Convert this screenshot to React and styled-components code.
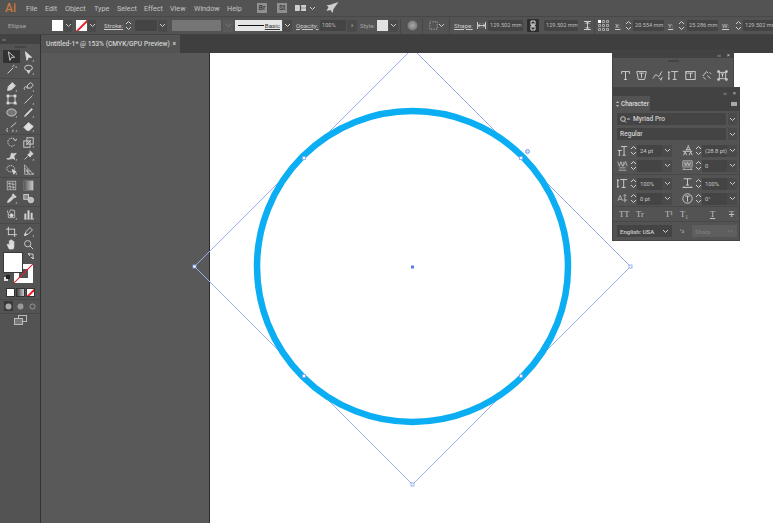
import styled, { createGlobalStyle } from "styled-components"

const GlobalStyle = createGlobalStyle`
    html, body {
        margin: 0;
        padding: 0;
        height: 100%;
        overflow: hidden;
        background: #535353;
        font-family: Roboto, "Liberation Sans", sans-serif;
    }
    #root {
        height: 100%;
    }
`

const Window = styled.div`
    width: 773px;
    height: 523px;
    display: flex;
    flex-direction: column;
    overflow: hidden;
    color: #d0d0d0;
`

const MenuBar = styled.div`
    height: 16px;
    display: flex;
    align-items: center;
    background: #535353;
    flex: none;
`

const Logo = styled.span`
    width: 26px;
    padding-left: 5px;
    box-sizing: border-box;
    color: #c4793f;
    font: 500 12px Roboto, sans-serif;
`

const MenuItem = styled.span`
    flex: none;
    width: ${(p) => p.$w}px;
    font-size: 7.2px;
    color: #c4c4c4;
`

const BridgeButton = styled.span`
    width: 10px;
    height: 10px;
    margin-left: ${(p) => p.$left}px;
    background: #8f8f8f;
    color: #3c3c3c;
    font-size: 6.5px;
    font-weight: 700;
    display: flex;
    align-items: center;
    justify-content: center;
`

const ControlBar = styled.div`
    height: 17px;
    flex: none;
    display: flex;
    align-items: center;
    background: #535353;
    border-top: 1px solid #484848;
    border-bottom: 1px solid #434343;
    white-space: nowrap;

    & > * {
        flex: none;
    }
`

const Spaced = styled.span`
    display: flex;
    align-items: center;
    flex: none;
    margin-left: ${(p) => p.$left || 0}px;
`

const Label = styled.span`
    font-size: 6.2px;
    color: ${(p) => p.$dim ? "#a8a8a8" : "#cbcbcb"};
    width: ${(p) => p.$w}px;
    margin-left: ${(p) => p.$left || 0}px;
    text-decoration: ${(p) => p.$under ? "underline" : "none"};
`

const Swatch = styled.span`
    position: relative;
    overflow: hidden;
    width: 11px;
    height: 11px;
    margin-left: ${(p) => p.$left || 0}px;
    background: ${(p) => p.$color || "#fff"};
`

const RedSlash = styled.span`
    position: absolute;
    left: -3px;
    top: 5px;
    width: 18px;
    height: 1.5px;
    background: #e8242a;
    transform: rotate(-45deg);
`

const DropBox = styled.span`
    flex: none;
    width: ${(p) => p.$w || 9}px;
    height: 12px;
    margin-left: ${(p) => p.$left || 0}px;
    display: flex;
    align-items: center;
    justify-content: center;
    background: ${(p) => p.$off ? "#5a5a5a" : "#4a4a4a"};
    border-radius: 1px;
    font-size: 7px;
`

const InputBox = styled.span`
    width: ${(p) => p.$w}px;
    height: 11px;
    margin-left: ${(p) => p.$left || 0}px;
    padding-left: 2px;
    box-sizing: border-box;
    background: ${(p) => p.$bg || "#444"};
    color: #bdbdbd;
    font-size: 5.6px;
    line-height: 11px;
    border-radius: 1px;
`

const StrokeProfile = styled.span`
    width: 47px;
    height: 11px;
    margin-left: 2px;
    background: #e6e6e6;
    display: flex;
    align-items: center;
    gap: 1px;
    padding: 0 2px 0 3px;
    box-sizing: border-box;
    color: #333;
    font-size: 6.2px;
    text-decoration: underline;
`

const ProfileLine = styled.span`
    flex: 1;
    height: 1px;
    background: #111;
`

const Divider = styled.span`
    width: 1px;
    height: 16px;
    margin-left: ${(p) => p.$left || 0}px;
    background: #474747;
`

const LinkButton = styled.span`
    width: 12px;
    height: 13px;
    margin-left: 4px;
    background: #2e2e2e;
    border-radius: 1px;
    display: flex;
    align-items: center;
    justify-content: center;
`

const Body = styled.div`
    flex: 1;
    display: flex;
    min-height: 0;
`

const ToolsPanel = styled.aside`
    width: 40px;
    flex: none;
    background: #535353;
    border-right: 1px solid #333;
    display: flex;
    flex-direction: column;
`

const PanelCap = styled.div`
    height: 9px;
    background: #424242;
    color: #bbb;
    font-size: 6px;
    line-height: 8px;
    padding-left: 2px;
`

const Grip = styled.div`
    width: 11px;
    height: 2px;
    margin: 2px auto 1px;
    background: #444;
`

const HiddenDefs = styled.svg`
    position: absolute;
`

const ToolGroup = styled.div`
    display: grid;
    grid-template-columns: 17px 17px;
    grid-auto-rows: 13.3px;
    padding: 1px 2px 1px 3px;
    border-bottom: ${(p) => p.$last ? "none" : "1px solid #484848"};
`

const ToolCell = styled.span`
    display: flex;
    align-items: center;
    justify-content: center;
    background: ${(p) => p.$active ? "#333" : "transparent"};
`

const ColorBlock = styled.div`
    position: relative;
    height: 33px;
    margin: 1px 0 0 4px;
`

const FillSquare = styled.span`
    position: absolute;
    left: 0;
    top: 0;
    width: 18px;
    height: 19px;
    background: #fff;
    box-shadow: 0 0 0 1px #3a3a3a;
    z-index: 1;
`

const StrokeSquare = styled.span`
    position: absolute;
    left: 10px;
    top: 11px;
    width: 19px;
    height: 19px;
    background: #fff;
    overflow: hidden;
`

const StrokeHole = styled.span`
    position: absolute;
    left: 5px;
    top: 5px;
    width: 9px;
    height: 9px;
    background: #535353;
`

const StrokeSlash = styled.span`
    position: absolute;
    left: -4px;
    top: 9px;
    width: 27px;
    height: 1.2px;
    background: #ee1c25;
    transform: rotate(-45deg);
`

const SwapArrow = styled.svg`
    position: absolute;
    left: 23px;
    top: 0;
`

const DefaultMini = styled.svg`
    position: absolute;
    left: 0;
    top: 22px;
`

const ModeRow = styled.div`
    display: flex;
    gap: 3px;
    justify-content: center;
    align-items: center;
    height: 10px;
    padding-bottom: 2px;
    border-bottom: 1px solid #484848;
    margin-top: 1px;
`

const ModeSwatch = styled.span`
    position: relative;
    overflow: hidden;
    width: 7px;
    height: 7px;
    background: ${(p) => p.$fill};
    box-shadow: 0 0 0 1px #333;
`

const NoneSlash = styled.span`
    position: absolute;
    left: -2px;
    top: 3px;
    width: 12px;
    height: 1.5px;
    background: #ee1c25;
    transform: rotate(-45deg);
`

const DrawMode = styled.span`
    width: 9px;
    height: 10px;
    display: flex;
    align-items: center;
    justify-content: center;
    background: ${(p) => p.$active ? "#3a3a3a" : "transparent"};
`

const ScreenRow = styled.div`
    display: flex;
    justify-content: center;
    padding-top: 1px;
`

const Main = styled.main`
    flex: 1;
    min-width: 0;
    display: flex;
    flex-direction: column;
`

const TabBar = styled.div`
    height: 18px;
    flex: none;
    background: #3f3f3f;
    display: flex;
`

const Tab = styled.div`
    width: 139px;
    display: flex;
    align-items: center;
    justify-content: space-between;
    padding: 0 4px 0 5px;
    box-sizing: border-box;
    background: #535353;
    font-size: 6.7px;
    font-weight: 500;
    color: #d0d0d0;
    white-space: nowrap;
`

const Workspace = styled.div`
    position: relative;
    flex: 1;
    display: flex;
    min-height: 0;
`

const Pasteboard = styled.div`
    width: 168px;
    flex: none;
    background: #595959;
    border-right: 1px solid #2b2b2b;
`

const Artboard = styled.div`
    flex: 1;
    background: #fff;
`

const Selection = styled.svg`
    position: absolute;
    left: 0;
    top: 0;
    pointer-events: none;
`

const FloatingPanel = styled.section`
    position: absolute;
    left: ${(p) => p.$left}px;
    top: ${(p) => p.$top}px;
    width: ${(p) => p.$w}px;
    background: #535353;
    box-shadow: 0 0 0 1px #444;
`

const PanelHeader = styled.div`
    height: ${(p) => p.$h}px;
    background: #424242;
    display: flex;
    justify-content: flex-end;
    align-items: center;
    gap: 6px;
    padding-right: 3px;
    color: #c5c5c5;
    font-size: 6px;
`

const GlyphRow = styled.div`
    display: flex;
    justify-content: space-between;
    padding: 0 5px 0 7px;
    height: 25px;
    align-items: center;
`

const TabRow = styled.div`
    height: 15px;
    background: #424242;
    display: flex;
    justify-content: space-between;
    align-items: center;
    padding-right: 2px;
`

const PanelTab = styled.div`
    width: 37px;
    height: 15px;
    display: flex;
    align-items: center;
    gap: 2px;
    padding-left: 3px;
    box-sizing: border-box;
    background: #535353;
    font-size: 6.4px;
    font-weight: 500;
    color: #dcdcdc;
`

const PanelMenu = styled.span`
    width: 6px;
    height: 4px;
    background: #aaa;
`

const FontRow = styled.div`
    display: flex;
    align-items: center;
    gap: 2px;
    padding: ${(p) => p.$top}px 3px 0 4px;
`

const FontInput = styled.div`
    width: 109px;
    height: 12px;
    flex: none;
    background: #444;
    display: flex;
    align-items: center;
    gap: 3px;
    padding-left: 3px;
    box-sizing: border-box;
    font-size: 6.6px;
    font-weight: 500;
    color: #cfcfcf;
`

const FieldGrid = styled.div`
    display: grid;
    grid-template-columns: 65px 61px;
    padding: ${(p) => p.$top}px 0 ${(p) => p.$bottom}px 0;
    border-bottom: ${(p) => p.$line ? "1px solid #484848" : "none"};
    grid-auto-rows: 15px;
    align-items: center;
`

const Field = styled.div`
    display: flex;
    align-items: center;
    height: 12px;
`

const FieldIcon = styled.span`
    width: 16px;
    flex: none;
    display: flex;
    justify-content: center;
    padding-left: 2px;
    box-sizing: border-box;
`

const FieldSpin = styled.span`
    width: 8px;
    flex: none;
    display: flex;
    justify-content: center;
`

const FieldValue = styled.span`
    flex: none;
    width: 25px;
    height: 12px;
    padding-left: 3px;
    box-sizing: border-box;
    background: #444;
    font-size: 5.8px;
    line-height: 12px;
    color: #c8c8c8;
    white-space: nowrap;
`

const StyleRow = styled.div`
    display: flex;
    align-items: center;
    height: 14px;
    padding-left: 6px;
    border-top: 1px solid #484848;
    border-bottom: 1px solid #484848;
`

const StyleGlyph = styled.span`
    flex: none;
    width: ${(p) => p.$w}px;
    font: 400 8.5px "Liberation Serif", serif;
    color: #c2c2c2;
    text-decoration: ${(p) => p.$line || "none"};
`

const LangRow = styled.div`
    display: flex;
    align-items: center;
    padding: 3px 3px 3px 4px;
    gap: 4px;
`

const LangBox = styled.span`
    flex: none;
    width: ${(p) => p.$w}px;
    height: 12px;
    display: flex;
    align-items: center;
    justify-content: space-between;
    padding: 0 3px;
    box-sizing: border-box;
    background: ${(p) => p.$off ? "#5e5e5e" : "#444"};
    color: ${(p) => p.$off ? "#7c7c7c" : "#d0d0d0"};
    font-size: 6px;
    font-weight: 500;
`

const LangGlyph = styled.span`
    flex: none;
    width: 12px;
    text-align: center;
    font: 400 6px "Liberation Serif", serif;
    color: #bbb;
`

const Chevron = ({ color = "#cfcfcf" }) => (
    <svg width="7" height="5" viewBox="0 0 7 5">
        <path d="M1 1l2.500 2.500L6 1" fill="none" stroke={color} strokeWidth="1" />
    </svg>
)

const Spinner = () => (
    <svg width="7" height="11" viewBox="0 0 7 11">
        <path d="M1 4l2.500-2.500L6 4M1 7l2.500 2.500L6 7" fill="none" stroke="#cfcfcf" strokeWidth="1" />
    </svg>
)

const Ico = ({ s = 11, children }) => (
    <svg width={s} height={s} viewBox="0 0 14 14" fill="none" stroke="#cfcfcf" strokeWidth="1.2">
        {children}
    </svg>
)

const Corner = () => <path d="M12.500 13h1v-1z" fill="#ddd" stroke="#ddd" strokeWidth=".6" />

const toolGroups = [
    [
        [<path d="M3 1l8 7H7l-2 4z" />, <><path d="M3 1l8 7H7l-2 4z" fill="#e0e0e0" /><Corner /></>],
        [<><path d="M2 12l7-7" /><path d="M10 1v2M12 4h2M8 3l1 1" /></>, <><ellipse cx="7" cy="5" rx="5" ry="3.500" /><path d="M5 8l2 4 2-3" fill="#ddd" /><Corner /></>],
    ],
    [
        [<><path d="M2 12l1-5 5-5 4 4-5 5z" fill="#d4d4d4" /><Corner /></>, <><path d="M2 11c-2-4 3-5 4-2M5 9l1-4 4-3 3 3-3 4z" /><Corner /></>],
        [<><rect x="2.500" y="2.500" width="9" height="9" /><path d="M1 1h3v3H1zM10 1h3v3h-3zM1 10h3v3H1zM10 10h3v3h-3z" fill="#ddd" strokeWidth=".4" /><Corner /></>, <><path d="M2 12L12 2" /><Corner /></>],
        [<><ellipse cx="7" cy="7" rx="6" ry="4.500" fill="#777" /><Corner /></>, <><path d="M2 12l2-1 8-8-1-1-8 8z" fill="#d4d4d4" /><Corner /></>],
        [<><path d="M2 9a4 4 0 1 0 7 2M6 8l7-6" /><Corner /></>, <><path d="M1 8l6-6 6 5-5 5H5z" fill="#e0e0e0" /><Corner /></>],
    ],
    [
        [<><path d="M11 10a5 5 0 1 1 1-5" strokeDasharray="2 1" /><path d="M9 1l3 4 2-3" /></>, <><rect x="1" y="5" width="8" height="8" /><rect x="5" y="1" width="8" height="8" /><path d="M4 10l6-6" /><Corner /></>],
        [<><path d="M1 11c3 1 4-1 5-3l1-4 3 1 3-1-3 4 1 4c-3-3-6 1-10-1z" fill="#d4d4d4" /><Corner /></>, <><path d="M9 1l4 4-2 1-2 3-3-3 3-2zM6 8l-4 4" fill="#d4d4d4" /><Corner /></>],
        [<><ellipse cx="6" cy="6" rx="5" ry="4" strokeDasharray="2 1" /><path d="M8 7l5 3-2 1-1 2z" fill="#ddd" /><Corner /></>, <><path d="M2 1v12h11zM2 5l7 8M6 6v7M2 9h8" strokeWidth=".9" /><Corner /></>],
    ],
    [
        [<><rect x="1.500" y="1.500" width="11" height="11" strokeWidth=".8" /><path d="M2 5c3-2 7 2 10 0M2 9c3-2 7 2 10 0M5 2c-2 3 2 7 0 10M9 2c-2 3 2 7 0 10" strokeWidth=".9" /></>, <rect x="1" y="1" width="12" height="12" fill="url(#toolGrad)" stroke="#888" strokeWidth=".6" />],
        [<><path d="M2 12l1-3 5-5 2 2-5 5zM8 3l1-2 4 4-2 1z" fill="#d4d4d4" /><Corner /></>, <><rect x="1" y="2" width="6" height="6" fill="#888" /><circle cx="10" cy="9" r="3.500" fill="#bbb" /></>],
    ],
    [
        [<><path d="M2 2v3M2 7h1M6 1l5 1v9H3V6z" strokeWidth="1" /><circle cx="7" cy="8" r="2" fill="#ddd" /><Corner /></>, <><path d="M2 13V6h2v7zM6 13V2h2v11zM10 13V5h2v8zM1 13h12" fill="#d4d4d4" strokeWidth=".5" /><Corner /></>],
    ],
    [
        [<><rect x="3" y="4" width="8" height="7" /><path d="M3 1v3M0 4h3M11 11v3M11 11h3" /></>, <><path d="M2 12l2-5 5-5 3 3-5 5z" /><path d="M2 12l3-1-2-2z" fill="#ddd" /><Corner /></>],
        [<path d="M4 13L1 7l2-1 1 2V2h1.600v5V1h1.600v6V1.600h1.600V7V3h1.600v7l-1 3z" fill="#e0e0e0" strokeWidth=".3" />, <><circle cx="6" cy="6" r="4" /><path d="M9 9l4 4" /></>],
    ],
]

const typeGlyphs = [
    <path d="M2 5V2h10v3M7 2v10M5 12h4" />,
    <><path d="M1 2h12l-2 10H3z" /><path d="M4 4h6M7 4v6" /></>,
    <path d="M1 11c2-1 2-5 4-5s2 3 4 2 1-5 4-6M9 10l3 3M13 9l-2 4" />,
    <path d="M1 2v10M0 4l1-2 1 2M0 10l1 2 1-2M4 2h9M8.500 2v10M6 12h5" />,
    <><rect x="1" y="2" width="12" height="10" /><path d="M4 4h6M7 4v6M1 2l2 3" /></>,
    <path d="M2 8l5-6 2 2M3 9l3 3M8 7l4 4M11 3l2 2" />,
    <><path d="M3 3h8v8H3zM5 5h4M7 5v4" /><path d="M1 1h2v2H1zM11 1h2v2h-2zM1 11h2v2H1zM11 11h2v2h-2z" fill="#ccc" /></>,
]

const fieldIcons = {
    size: <path d="M5 2h8M9 2v11M7 13h4M1 7h5M3 7v6M2 13h2" />,
    lead: <path d="M7 1h2M5 7l3-5 3 5M6 6h4M1 8h12M2 13l2-4 2 4M9 13l2-4 2 4" />,
    kern: <path d="M1 2l2 6 2-6M5 2l2 6 2-6M8 8l3-6 2 6M3 10h8M2 13h10" strokeWidth=".9" />,
    track: <><rect x="1" y="1" width="12" height="8" fill="#777" strokeWidth=".6" /><path d="M3 3l2 4 2-4 2 4 2-4M1 12h12M1 12l2-1M13 12l-2-1" strokeWidth=".9" /></>,
    vscale: <path d="M1 2v10M0 4l1-2 1 2M0 10l1 2 1-2M4 2h9M8.500 2v10M6 12h5" />,
    hscale: <path d="M2 1h10M7 1v8M5 9h4M1 12h12M1 12l2-1M13 12l-2-1" />,
    base: <path d="M1 10l3-7 3 7M2 8h4M10 2v10M8 4l2-2 2 2M8 9h5" strokeWidth=".9" />,
    rot: <><circle cx="7" cy="7" r="6" /><path d="M4 4h6M7 4v7" /></>,
}

const CharField = ({ icon, value }) => (
    <Field>
        <FieldIcon><Ico>{fieldIcons[icon]}</Ico></FieldIcon>
        <FieldSpin><Spinner /></FieldSpin>
        <FieldValue>{value}</FieldValue>
        <DropBox $w={10}><Chevron /></DropBox>
    </Field>
)

const anchors = [[304, 158], [521, 158], [304, 376], [521, 376], [194.5, 266.5], [630.5, 266.5], [412.5, 484.5]]

const menus = [["File", 19], ["Edit", 20], ["Object", 29], ["Type", 23], ["Select", 27], ["Effect", 26], ["View", 24], ["Window", 33], ["Help", 14]]

export default function App() {
    return (
        <>
            <GlobalStyle />
            <Window>
                <MenuBar>
                    <Logo>Ai</Logo>
                    {menus.map(([name, w]) => <MenuItem key={name} $w={w}>{name}</MenuItem>)}
                    <BridgeButton $left={16}>Br</BridgeButton>
                    <BridgeButton $left={10}>St</BridgeButton>
                    <Spaced $left={8}>
                        <svg width="11" height="8" viewBox="0 0 16 9">
                            <path d="M0 0h7v9H0zM9 0h7v4H9zM9 5h7v4H9z" fill="#d0d0d0" />
                        </svg>
                    </Spaced>
                    <Spaced $left={3}><Chevron /></Spaced>
                    <Spaced $left={9}>
                        <svg width="14" height="12" viewBox="0 0 13 12">
                            <path d="M13 0L4 3 1 3l2 2-2 4 4-1 2 3 1-4z" fill="#cfcfcf" />
                        </svg>
                    </Spaced>
                </MenuBar>

                <ControlBar>
                    <Label $dim $w={26} $left={8}>Ellipse</Label>
                    <Swatch $left={18} />
                    <DropBox $left={1} $w={8}><Chevron /></DropBox>
                    <Swatch $left={4}><RedSlash /></Swatch>
                    <DropBox $left={1} $w={8}><Chevron /></DropBox>
                    <Label $under $w={21} $left={8}>Stroke:</Label>
                    <Spinner />
                    <InputBox $w={22} $left={3} />
                    <DropBox $left={1}><Chevron /></DropBox>
                    <InputBox $w={49} $left={5} $bg="#757575" />
                    <DropBox $w={10} $left={2} $off><Chevron color="#777" /></DropBox>
                    <StrokeProfile><ProfileLine />Basic</StrokeProfile>
                    <DropBox $left={1}><Chevron /></DropBox>
                    <Label $under $w={22} $left={4}>Opacity:</Label>
                    <InputBox $w={26} $left={2}>100%</InputBox>
                    <DropBox $w={10} $left={1}>›</DropBox>
                    <Label $dim $w={15} $left={3}>Style:</Label>
                    <Swatch $left={2} $color="#e2e2e2" />
                    <DropBox $left={1}><Chevron /></DropBox>
                    <Divider $left={2} />
                    <Spaced $left={6}>
                        <svg width="11" height="11" viewBox="0 0 11 11">
                            <defs>
                                <radialGradient id="globeFill"><stop offset="0" stopColor="#aaa" /><stop offset="1" stopColor="#777" /></radialGradient>
                            </defs>
                            <circle cx="5.500" cy="5.500" r="5" fill="url(#globeFill)" />
                        </svg>
                    </Spaced>
                    <Divider $left={4} />
                    <Spaced $left={6}>
                        <svg width="9" height="9" viewBox="0 0 11 11">
                            <rect x="1" y="1" width="9" height="9" fill="none" stroke="#bbb" strokeDasharray="1.500 1.500" />
                        </svg>
                    </Spaced>
                    <Chevron />
                    <Divider $left={4} />
                    <Label $under $w={23} $left={4}>Shape:</Label>
                    <svg width="9" height="7" viewBox="0 0 9 7">
                        <path d="M.5 0v7M8.500 0v7M1 3.500h7M1 3.500l2-2M1 3.500l2 2M8 3.500l-2-2M8 3.500l-2 2" fill="none" stroke="#ccc" />
                    </svg>
                    <InputBox $w={35} $left={2}>129.502 mm</InputBox>
                    <LinkButton>
                        <svg width="6" height="11" viewBox="0 0 6 11"><path d="M1 1h4v4H1zM1 6h4v4H1zM3 3v5" fill="none" stroke="#ddd" /></svg>
                    </LinkButton>
                    <InputBox $w={34} $left={5}>129.502 mm</InputBox>
                    <Spaced $left={6}>
                        <svg width="7" height="9" viewBox="0 0 7 9">
                            <path d="M0 .5h7M0 8.500h7M3.500 1v7M3.500 1l-2 2M3.500 1l2 2M3.500 8l-2-2M3.500 8l2-2" fill="none" stroke="#ccc" />
                        </svg>
                    </Spaced>
                    <Divider $left={3} />
                    <Spaced $left={3}>
                        <svg width="11" height="11" viewBox="0 0 11 11">
                            <path d="M0 0h3v3H0z" fill="#fff" />
                            <path d="M4.500.5h2v2h-2zM8.500.5h2v2h-2zM.5 4.500h2v2h-2zM4.500 4.500h2v2h-2zM8.500 4.500h2v2h-2zM.5 8.500h2v2h-2zM4.500 8.500h2v2h-2zM8.500 8.500h2v2h-2z" fill="none" stroke="#bbb" strokeWidth=".8" />
                        </svg>
                    </Spaced>
                    <Label $under $w={6} $left={6}>X:</Label>
                    <Spaced $left={4}><Spinner /></Spaced>
                    <InputBox $w={31} $left={1}>20.554 mm</InputBox>
                    <Label $under $w={6} $left={4}>Y:</Label>
                    <Spaced $left={4}><Spinner /></Spaced>
                    <InputBox $w={31} $left={2}>25.286 mm</InputBox>
                    <Label $under $w={8} $left={4}>W:</Label>
                    <Spaced $left={5}><Spinner /></Spaced>
                    <InputBox $w={30} $left={1}>129.502 mm</InputBox>
                </ControlBar>

                <Body>
                    <ToolsPanel>
                        <PanelCap>‹‹</PanelCap>
                        <Grip />
                        <HiddenDefs width="0" height="0">
                            <defs>
                                <linearGradient id="toolGrad"><stop offset="0" stopColor="#555" /><stop offset="1" stopColor="#ccc" /></linearGradient>
                            </defs>
                        </HiddenDefs>
                        {toolGroups.map((group, g) => (
                            <ToolGroup key={g} $last={g === toolGroups.length - 1}>
                                {group.map((row, r) => row.map((icon, c) => (
                                    <ToolCell key={`${r}-${c}`} $active={g === 0 && r === 0 && c === 0}>
                                        <Ico>{icon}</Ico>
                                    </ToolCell>
                                )))}
                            </ToolGroup>
                        ))}
                        <ColorBlock>
                            <FillSquare />
                            <StrokeSquare><StrokeHole /><StrokeSlash /></StrokeSquare>
                            <SwapArrow width="7" height="7" viewBox="0 0 7 7">
                                <path d="M1 1h5v5M1 1l2-1M1 1l2 2M6 6l-2-2M6 6l1-2" fill="none" stroke="#ccc" />
                            </SwapArrow>
                            <DefaultMini width="6" height="7" viewBox="0 0 6 7">
                                <path d="M0 2h4v4H0z" fill="#ddd" /><path d="M2 0h4v4H2z" fill="#222" />
                            </DefaultMini>
                        </ColorBlock>
                        <ModeRow>
                            <ModeSwatch $fill="#fff" />
                            <ModeSwatch $fill="linear-gradient(90deg,#444,#ccc)" />
                            <ModeSwatch $fill="#fff"><NoneSlash /></ModeSwatch>
                        </ModeRow>
                        <ModeRow>
                            <DrawMode $active><svg width="7" height="7"><circle cx="3.500" cy="3.500" r="3" fill="#aaa" /></svg></DrawMode>
                            <DrawMode><svg width="7" height="7"><circle cx="3.500" cy="3.500" r="3" fill="#999" /></svg></DrawMode>
                            <DrawMode><svg width="7" height="7"><circle cx="3.500" cy="3.500" r="2.500" fill="none" stroke="#999" /></svg></DrawMode>
                        </ModeRow>
                        <ScreenRow>
                            <svg width="13" height="10" viewBox="0 0 13 10">
                                <rect x="4.500" y=".5" width="8" height="6" fill="#535353" stroke="#bbb" />
                                <rect x=".5" y="3.500" width="8" height="6" fill="#777" stroke="#bbb" />
                            </svg>
                        </ScreenRow>
                    </ToolsPanel>

                    <Main>
                        <TabBar>
                            <Tab>
                                Untitled-1* @ 153% (CMYK/GPU Preview)
                                <span>×</span>
                            </Tab>
                        </TabBar>
                        <Workspace>
                            <Pasteboard />
                            <Artboard />
                            <Selection width="732" height="470" viewBox="41 53 732 470">
                                <path d="M412.500 48.500L630.500 266.500 412.500 484.500 194.500 266.500Z" fill="none" stroke="#98aef0" strokeWidth="1" />
                                <circle cx="412.500" cy="266.500" r="155.500" fill="none" stroke="#0baef2" strokeWidth="6.500" />
                                {anchors.map(([x, y]) => (
                                    <rect key={x + "-" + y} x={x - 1.5} y={y - 1.5} width="3" height="3" fill="#fff" stroke="#86a0ea" strokeWidth=".8" />
                                ))}
                                <rect x="411" y="265.500" width="3" height="3" fill="#4f7ee8" />
                                <circle cx="527.500" cy="151.500" r="2" fill="#cfdcfb" stroke="#6f8fe6" strokeWidth=".8" />
                            </Selection>

                            <FloatingPanel $left={572} $top={-2} $w={120}>
                                <PanelHeader $h={7}><span>‹‹</span><span>×</span></PanelHeader>
                                <Grip />
                                <GlyphRow>
                                    {typeGlyphs.map((glyph, i) => (
                                        <Ico key={i}>{glyph}</Ico>
                                    ))}
                                </GlyphRow>
                            </FloatingPanel>

                            <FloatingPanel $left={572} $top={35} $w={126}>
                                <PanelHeader $h={8}><span>‹‹</span><span>×</span></PanelHeader>
                                <TabRow>
                                    <PanelTab>
                                        <svg width="3" height="6" viewBox="0 0 3 6"><path d="M1.500 0L3 2H0zM1.500 6L0 4h3z" fill="#bbb" /></svg>
                                        Character
                                    </PanelTab>
                                    <PanelMenu />
                                </TabRow>
                                <FontRow $top={2}>
                                    <FontInput>
                                        <svg width="10" height="7" viewBox="0 0 10 7"><circle cx="3" cy="3" r="2.300" fill="none" stroke="#ccc" /><path d="M4.500 5l1.500 1.500M7 3h3" stroke="#ccc" /></svg>
                                        Myriad Pro
                                    </FontInput>
                                    <DropBox $w={9}><Chevron /></DropBox>
                                </FontRow>
                                <FontRow $top={3}>
                                    <FontInput>Regular</FontInput>
                                    <DropBox $w={9}><Chevron /></DropBox>
                                </FontRow>
                                <FieldGrid $top={3} $bottom={1} $line>
                                    <CharField icon="size" value="24 pt" />
                                    <CharField icon="lead" value="(28.8 pt)" />
                                    <CharField icon="kern" value="" />
                                    <CharField icon="track" value="0" />
                                </FieldGrid>
                                <FieldGrid $top={1} $bottom={0}>
                                    <CharField icon="vscale" value="100%" />
                                    <CharField icon="hscale" value="100%" />
                                    <CharField icon="base" value="0 pt" />
                                    <CharField icon="rot" value="0°" />
                                </FieldGrid>
                                <StyleRow>
                                    <StyleGlyph $w={17}>TT</StyleGlyph>
                                    <StyleGlyph $w={29}>Tr</StyleGlyph>
                                    <StyleGlyph $w={15}>T¹</StyleGlyph>
                                    <StyleGlyph $w={30}>T₁</StyleGlyph>
                                    <StyleGlyph $w={19} $line="underline">T</StyleGlyph>
                                    <StyleGlyph $w={8} $line="line-through">T</StyleGlyph>
                                </StyleRow>
                                <LangRow>
                                    <LangBox $w={55}>English: USA<Chevron /></LangBox>
                                    <LangGlyph>ªa</LangGlyph>
                                    <LangBox $w={45} $off>Sharp<Chevron color="#777" /></LangBox>
                                </LangRow>
                            </FloatingPanel>
                        </Workspace>
                    </Main>
                </Body>
            </Window>
        </>
    )
}
